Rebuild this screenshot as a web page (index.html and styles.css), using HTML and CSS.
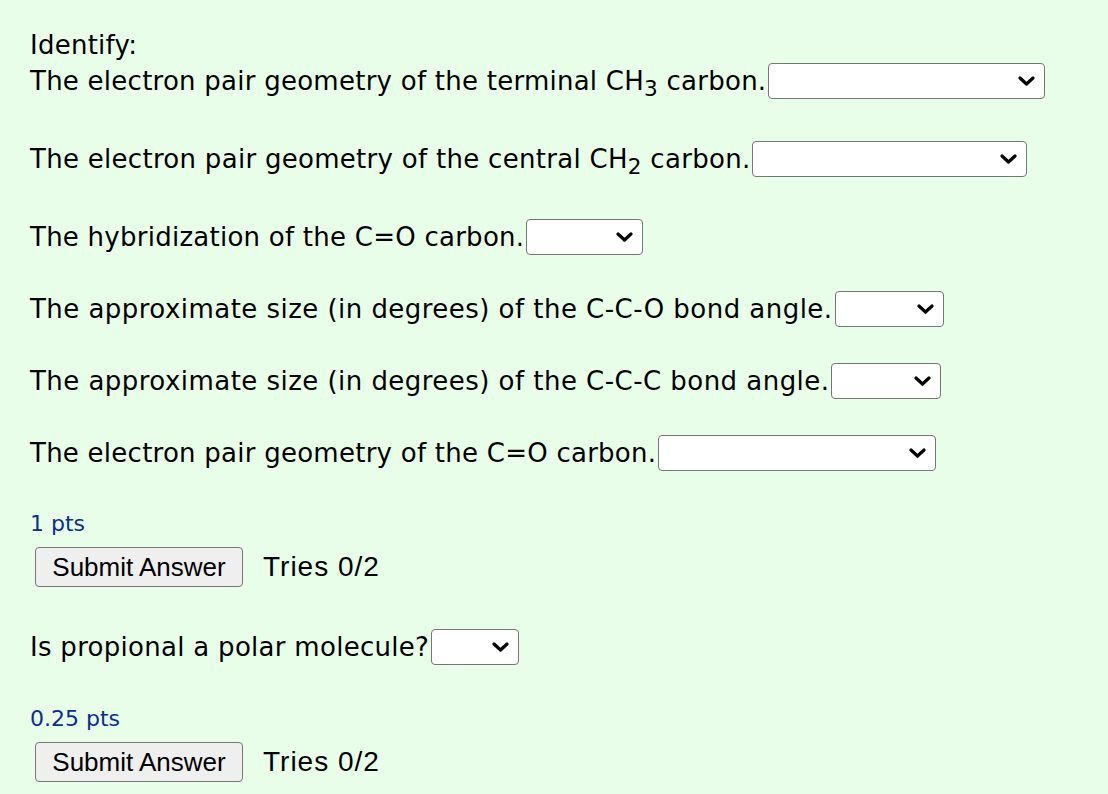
FILE: index.html
```html
<!DOCTYPE html>
<html>
<head>
<meta charset="utf-8">
<link rel="stylesheet" href="styles.css">
</head>
<body>
<div class="page">
  <div class="intro">Identify:</div>
  <div class="row sub-row"><span class="q">The electron pair geometry of the terminal CH<sub>3</sub> carbon.</span><span class="sel w276"><svg viewBox="0 0 17 10" class="chev"><path d="M2 2 L8.5 8 L15 2" /></svg></span></div>
  <div class="row sub-row"><span class="q wider">The electron pair geometry of the central CH<sub>2</sub> carbon.</span><span class="sel w274"><svg viewBox="0 0 17 10" class="chev"><path d="M2 2 L8.5 8 L15 2" /></svg></span></div>
  <div class="row"><span class="q">The hybridization of the C=O carbon.</span><span class="sel w116"><svg viewBox="0 0 17 10" class="chev"><path d="M2 2 L8.5 8 L15 2" /></svg></span></div>
  <div class="row"><span class="q wide">The approximate size (in degrees) of the C-C-O bond angle.</span><span class="sel w108"><svg viewBox="0 0 17 10" class="chev"><path d="M2 2 L8.5 8 L15 2" /></svg></span></div>
  <div class="row"><span class="q wide">The approximate size (in degrees) of the C-C-C bond angle.</span><span class="sel w109"><svg viewBox="0 0 17 10" class="chev"><path d="M2 2 L8.5 8 L15 2" /></svg></span></div>
  <div class="row"><span class="q">The electron pair geometry of the C=O carbon.</span><span class="sel w277"><svg viewBox="0 0 17 10" class="chev"><path d="M2 2 L8.5 8 L15 2" /></svg></span></div>

  <div class="pts first-pts">1 pts</div>
  <div class="submit-row"><button class="btn">Submit Answer</button><span class="tries">Tries 0/2</span></div>

  <div class="row polar"><span class="q wider">Is propional a polar molecule?</span><span class="sel w87"><svg viewBox="0 0 17 10" class="chev"><path d="M2 2 L8.5 8 L15 2" /></svg></span></div>

  <div class="pts second-pts">0.25 pts</div>
  <div class="submit-row"><button class="btn">Submit Answer</button><span class="tries">Tries 0/2</span></div>
</div>
</body>
</html>
```

FILE: styles.css
```css
html, body {
  margin: 0;
  padding: 0;
  background: #e9fee9;
}
body {
  width: 1108px;
  height: 794px;
  overflow: hidden;
}
.page {
  padding: 27px 0 0 30px;
  font-family: "DejaVu Sans", Verdana, sans-serif;
  font-size: 26px;
  letter-spacing: 0.25px;
  color: #000;
}
.intro {
  height: 36px;
  line-height: 36px;
}
.row {
  display: flex;
  align-items: center;
  height: 36px;
  margin-bottom: 36px;
}
.row.sub-row {
  margin-bottom: 42px;
}
.q {
  white-space: nowrap;
  line-height: 36px;
}
.q.wide {
  letter-spacing: 0.46px;
}
.q.wider {
  letter-spacing: 0.29px;
}
.q sub {
  font-size: 0.83em;
  line-height: 0;
  vertical-align: -0.3em;
}
.sel {
  box-sizing: border-box;
  height: 36px;
  margin-left: 2px;
  background: #fff;
  border: 1.5px solid #767676;
  border-radius: 4px;
  display: flex;
  align-items: center;
  justify-content: flex-end;
  padding-right: 9px;
}
.chev {
  width: 17px;
  height: 10px;
}
.chev path {
  fill: none;
  stroke: #000;
  stroke-width: 3.2;
  stroke-linecap: round;
  stroke-linejoin: round;
}
.w276 { width: 277px; }
.w274 { width: 275px; }
.w116 { width: 117px; }
.w108 { width: 109px; }
.w109 { width: 110px; }
.w277 { width: 278px; }
.w87 { width: 88px; }
.pts {
  color: #0a2d94;
  font-size: 22px;
  letter-spacing: 0;
  line-height: 28px;
}
.first-pts {
  padding-top: 3px;
}
.second-pts {
  padding-top: 1px;
}
.submit-row {
  display: flex;
  align-items: center;
  height: 40px;
  margin-top: 9px;
}
.btn {
  box-sizing: border-box;
  margin-left: 5px;
  width: 208px;
  height: 40px;
  font-family: "Liberation Sans", Arial, sans-serif;
  font-size: 26px;
  letter-spacing: 0;
  color: #000;
  background: #efefef;
  border: 1.5px solid #767676;
  border-radius: 4px;
  padding: 0;
}
.tries {
  font-family: "Liberation Sans", Arial, sans-serif;
  font-size: 28px;
  letter-spacing: 1px;
  margin-left: 20px;
}
.row.polar {
  margin-top: 42px;
  margin-bottom: 39px;
}
```
